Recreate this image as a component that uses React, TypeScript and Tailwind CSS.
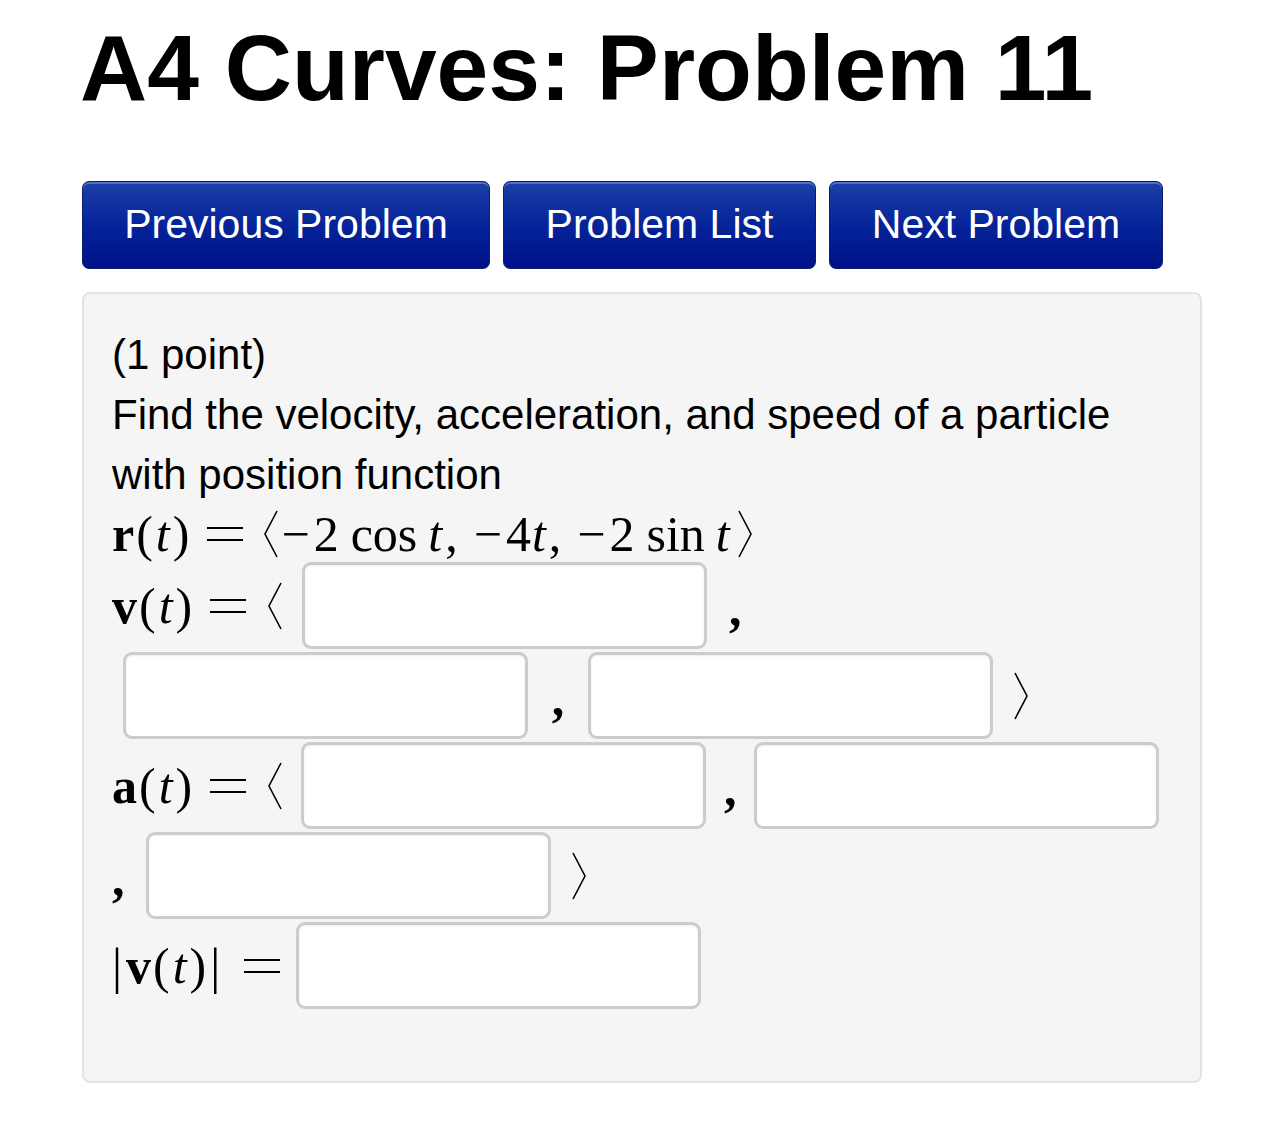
import React from 'react';

const sans = { fontFamily: '"Liberation Sans", Arial, Helvetica, sans-serif' };

function NavButton({ label, width }: { label: string; width: string }) {
  return (
    <button
      className={`h-[88px] ${width} rounded-[7px] border border-[#0a1d73] bg-gradient-to-b from-[#1d3fa6] via-[#06239a] to-[#001088] text-[41px] text-white shadow-[inset_0_2px_0_rgba(120,150,230,0.55)]`}
    >
      {label}
    </button>
  );
}

function Field({ className = '' }: { className?: string }) {
  return (
    <input
      type="text"
      className={`h-[87px] w-[405px] shrink-0 rounded-[9px] border-[3px] border-[#cccccc] bg-white shadow-[inset_0_1px_2px_rgba(0,0,0,0.08)] outline-none ${className}`}
    />
  );
}

function M({ children, className = '' }: { children: React.ReactNode; className?: string }) {
  return (
    <span className={`whitespace-nowrap text-[50px] leading-none text-black ${className}`} style={{ fontFamily: '"Liberation Serif", "DejaVu Serif", serif' }}>
      {children}
    </span>
  );
}

function T({ className = '' }: { className?: string }) {
  return <i className={`mx-[3px] ${className}`}>t</i>;
}

function Comma({ className = '' }: { className?: string }) {
  return <M className={`mt-[4px] text-center font-bold ${className}`}>,</M>;
}

function Angle({ dir, className = '' }: { dir: 'l' | 'r'; className?: string }) {
  return (
    <svg width="16" height="48" viewBox="0 0 16 48" className={className}>
      <path
        d={dir === 'l' ? 'M14 1 L2 24 L14 47' : 'M2 1 L14 24 L2 47'}
        fill="none"
        stroke="black"
        strokeWidth="1.6"
      />
    </svg>
  );
}

function Eq({ className = '' }: { className?: string }) {
  return (
    <svg width="36" height="16" viewBox="0 0 36 16" className={className}>
      <path d="M0 2 H36 M0 14 H36" stroke="black" strokeWidth="2" />
    </svg>
  );
}

function Label({ v, abs = false }: { v: string; abs?: boolean }) {
  return (
    <M>
      {abs && <span className="mr-[4px] font-light">|</span>}
      <b>{v}</b>
      <span className="ml-[2px]">(</span>
      <T />
      <span>)</span>
      {abs && <span className="ml-[4px] font-light">|</span>}
    </M>
  );
}

export default function App() {
  return (
    <div className="min-h-[1139px] w-[1284px] bg-white" style={sans}>
      <div className="pl-[80px] pr-[82px] pt-[20px]">
        <h1 className="text-[93px] font-bold leading-[96px] text-black">A4 Curves: Problem 11</h1>

        <div className="mt-[65px] flex gap-[13px] pl-[2px]">
          <NavButton label="Previous Problem" width="w-[408px]" />
          <NavButton label="Problem List" width="w-[313px]" />
          <NavButton label="Next Problem" width="w-[334px]" />
        </div>

        <div className="mt-[23px] ml-[2px] h-[791px] w-[1120px] rounded-[8px] border-2 border-[#e3e3e3] bg-[#f5f5f5] px-[28px] pt-[31px]">
          <p className="text-[42px] leading-[60px] text-black">(1 point)</p>
          <p className="text-[42px] leading-[60px] text-black">
            Find the velocity, acceleration, and speed of a particle with position function
          </p>

          {/* r(t) */}
          <div className="flex h-[57px] items-center">
            <Label v="r" />
            <Eq className="ml-[18px]" />
            <Angle dir="l" className="ml-[20px]" />
            <M className="flex items-baseline">
              <span className="ml-[2px]">−</span>
              <span className="ml-[4px]">2</span>
              <span className="ml-[12px]">cos</span>
              <T className="ml-[11px]" />
              <span>,</span>
              <span className="ml-[16px]">−</span>
              <span className="ml-[4px]">4</span>
              <T className="ml-[1px]" />
              <span>,</span>
              <span className="ml-[16px]">−</span>
              <span className="ml-[4px]">2</span>
              <span className="ml-[12px]">sin</span>
              <T className="ml-[11px]" />
            </M>
            <Angle dir="r" className="ml-[4px]" />
          </div>

          {/* v(t) */}
          <div className="flex h-[90px] items-start">
            <div className="flex h-[87px] items-center">
              <Label v="v" />
              <Eq className="ml-[18px]" />
              <Angle dir="l" className="ml-[21px]" />
              <Field className="ml-[19px]" />
              <Comma className="w-[56px]" />
            </div>
          </div>

          <div className="flex h-[90px] items-start">
            <div className="flex h-[87px] items-center">
              <Field className="ml-[11px]" />
              <Comma className="w-[60px]" />
              <Field />
              <Angle dir="r" className="ml-[20px]" />
            </div>
          </div>

          {/* a(t) */}
          <div className="flex h-[90px] items-start">
            <div className="flex h-[87px] items-center">
              <Label v="a" />
              <Eq className="ml-[18px]" />
              <Angle dir="l" className="ml-[21px]" />
              <Field className="ml-[18px]" />
              <Comma className="w-[48px]" />
              <Field />
            </div>
          </div>

          <div className="flex h-[90px] items-start">
            <div className="flex h-[87px] items-center">
              <Comma className="w-[10px]" />
              <Field className="ml-[24px]" />
              <Angle dir="r" className="ml-[20px]" />
            </div>
          </div>

          {/* |v(t)| */}
          <div className="flex h-[90px] items-start">
            <div className="flex h-[87px] items-center">
              <Label v="v" abs />
              <Eq className="ml-[24px]" />
              <Field className="ml-[16px]" />
            </div>
          </div>
        </div>
      </div>
    </div>
  );
}
